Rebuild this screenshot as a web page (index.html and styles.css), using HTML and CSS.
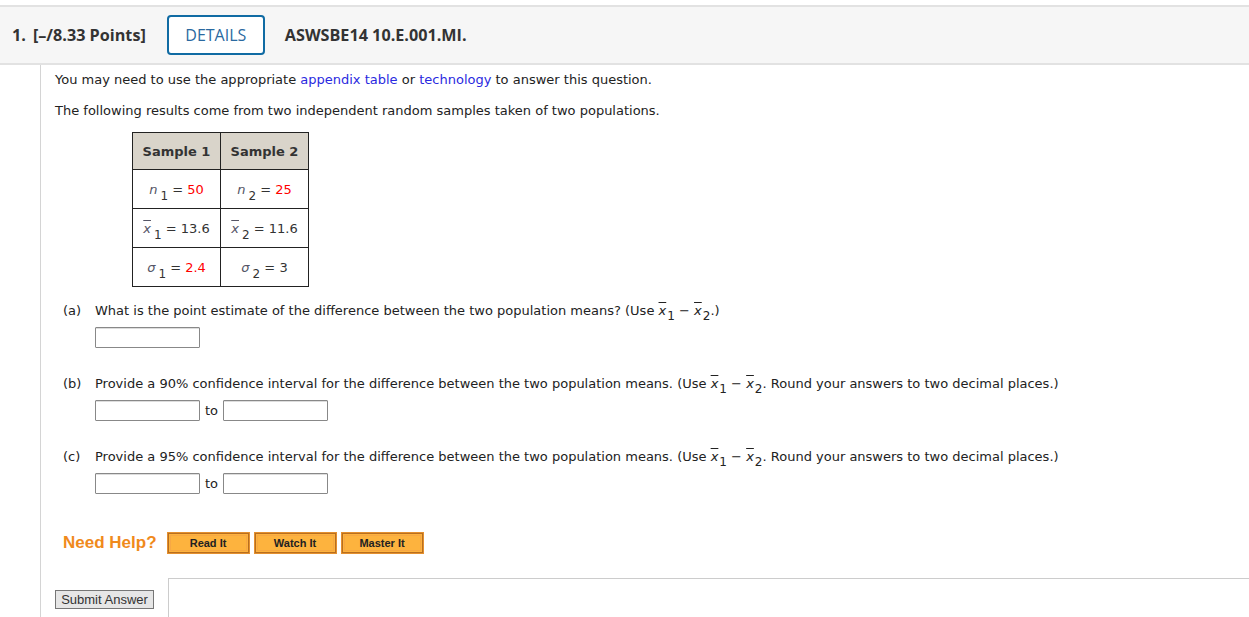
FILE: index.html
```html
<!DOCTYPE html>
<html>
<head>
<meta charset="utf-8">
<link rel="stylesheet" href="styles.css">
</head>
<body>
<div class="header">
  <span class="qnum">1.</span>
  <span class="points">[–/8.33 Points]</span>
  <span class="details">DETAILS</span>
  <span class="code">ASWSBE14 10.E.001.MI.</span>
</div>
<div class="main">
  <p class="line1">You may need to use the appropriate <span class="link">appendix table</span> or <span class="link">technology</span> to answer this question.</p>
  <p class="line2">The following results come from two independent random samples taken of two populations.</p>
  <table class="data">
    <tr><th>Sample 1</th><th>Sample 2</th></tr>
    <tr><td><i class="v">n</i><sub class="s">1</sub> = <span class="red">50</span></td><td><i class="v">n</i><sub class="s">2</sub> = <span class="red">25</span></td></tr>
    <tr><td><i class="v ov">x</i><sub class="s">1</sub> = 13.6</td><td><i class="v ov">x</i><sub class="s">2</sub> = 11.6</td></tr>
    <tr><td><i class="v">σ</i><sub class="s">1</sub> = <span class="red">2.4</span></td><td><i class="v">σ</i><sub class="s">2</sub> = 3</td></tr>
  </table>
  <div class="part pa">
    <div class="q"><span class="lbl">(a)</span><span>What is the point estimate of the difference between the two population means? (Use <i class="ov">x</i><sub>1</sub> − <i class="ov">x</i><sub>2</sub>.)</span></div>
    <div class="ans"><span class="box"></span></div>
  </div>
  <div class="part">
    <div class="q"><span class="lbl">(b)</span><span>Provide a 90% confidence interval for the difference between the two population means. (Use <i class="ov">x</i><sub>1</sub> − <i class="ov">x</i><sub>2</sub>. Round your answers to two decimal places.)</span></div>
    <div class="ans"><span class="box"></span><span class="to">to</span><span class="box"></span></div>
  </div>
  <div class="part">
    <div class="q"><span class="lbl">(c)</span><span>Provide a 95% confidence interval for the difference between the two population means. (Use <i class="ov">x</i><sub>1</sub> − <i class="ov">x</i><sub>2</sub>. Round your answers to two decimal places.)</span></div>
    <div class="ans"><span class="box"></span><span class="to">to</span><span class="box"></span></div>
  </div>
  <div class="help">
    <span class="needhelp">Need Help?</span>
    <span class="hbtn">Read It</span>
    <span class="hbtn">Watch It</span>
    <span class="hbtn">Master It</span>
  </div>
  <div class="footer">
    <span class="submit">Submit Answer</span>
    <div class="panel"></div>
  </div>
</div>
</body>
</html>
```
FILE: styles.css
```css
html, body { margin: 0; padding: 0; background: #fff; }
body { font-family: "DejaVu Sans", Verdana, sans-serif; font-size: 13px; color: #222; overflow: hidden; height: 617px; }

.header {
  margin-top: 5px;
  height: 56px;
  background: #f6f6f6;
  border-top: 2px solid #e2e2e2;
  border-bottom: 2px solid #e2e2e2;
  display: flex;
  align-items: center;
  padding-left: 12px;
  font-family: "Open Sans", sans-serif;
  font-weight: 700;
  font-size: 16.2px;
  color: #333;
}
.qnum { margin-right: 7px; }
.points { color: #333; }
.details {
  margin-left: 21px;
  width: 94px;
  height: 36px;
  border: 2px solid #106ba3;
  border-radius: 4px;
  display: flex;
  align-items: center;
  justify-content: center;
  color: #2a69a0;
  font-weight: 400;
  font-size: 16px;
  background: #fff;
}
.code { margin-left: 20px; }

.main {
  margin-left: 40px;
  border-left: 1px solid #d4d4d4;
  padding-left: 14px;
  height: 560px;
}
p { margin: 0; }
.line1 { padding-top: 6px; line-height: 18px; }
.line2 { padding-top: 13px; line-height: 18px; }
.link { color: #2a2ae0; }

.data {
  margin-left: 77px;
  margin-top: 12px;
  border-collapse: collapse;
  color: #333;
}
.data th, .data td {
  border: 1px solid #222;
  text-align: center;
  padding: 0;
  height: 38px;
}
.data th {
  background: #d9d4ca;
  font-weight: bold;
  width: 87px;
  height: 36px;
}
.v { color: #556; }
.red { color: #f00; }
sub { font-size: 12px; vertical-align: -5px; line-height: 0; margin-left: 1px; }
.s { margin-left: 3px; vertical-align: -6px; }
.ov { text-decoration: overline; }

.q { display: flex; line-height: 18px; }
.pa .q { margin-top: 15px; }
.part + .part .q { margin-top: 27px; }
.lbl { width: 32px; padding-left: 8px; }
.ans { display: flex; align-items: center; margin-top: 7px; padding-left: 40px; height: 21px; }
.box {
  display: inline-block;
  width: 103px;
  height: 19px;
  border: 1px solid #888;
  border-radius: 1px;
  background: #fff;
  box-shadow: inset 0 1px 0 #ddd;
}
.to { padding: 0 5px; font-size: 13px; }

.help {
  display: flex;
  align-items: center;
  margin-top: 38px;
  padding-left: 8px;
  height: 22px;
}
.needhelp {
  font-family: "Liberation Sans", Arial, sans-serif;
  font-weight: bold;
  font-size: 17px;
  color: #f08a1c;
  margin-right: 11px;
}
.hbtn {
  width: 75px;
  height: 14px;
  border: 1px solid #b86e20;
  outline: 1px solid #f7a844;
  outline-offset: -3px;
  background: #fdb33e;
  box-shadow: 0 0 0 1px #e4902e;
  font-family: "Liberation Sans", Arial, sans-serif;
  font-weight: bold;
  font-size: 11px;
  color: #222;
  display: flex;
  align-items: center;
  justify-content: center;
  padding: 2px;
  margin-right: 6px;
}

.footer {
  display: flex;
  margin-top: 24px;
}
.submit {
  margin-top: 12px;
  width: 97px;
  height: 17px;
  border: 1px solid #767676;
  background: #e6e6e6;
  font-family: "Liberation Sans", Arial, sans-serif;
  font-size: 13px;
  color: #333;
  display: flex;
  align-items: center;
  justify-content: center;
}
.panel {
  margin-left: 14px;
  flex: 1;
  height: 60px;
  border-top: 1px solid #ccc;
  border-left: 1px solid #ccc;
}
```
